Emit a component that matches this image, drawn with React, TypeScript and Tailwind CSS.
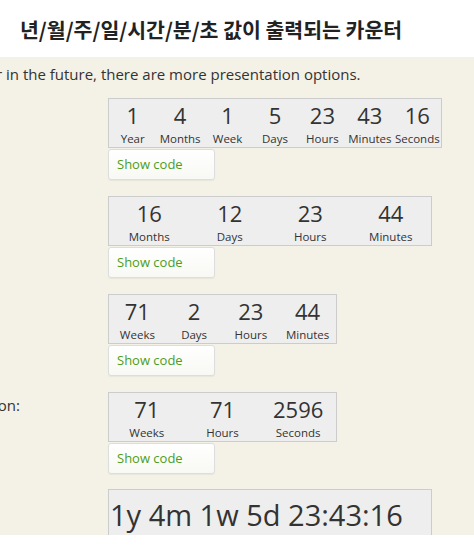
const font = { fontFamily: '"Segoe UI", "Open Sans", "Noto Sans CJK KR", sans-serif' }

type Section = { value: string; label: string }

function Counter({ sections, width }: { sections: Section[]; width: string }) {
  return (
    <div
      className={`${width} grid border border-[#cccccc] bg-[#eeeeee] pt-[2px]`}
      style={{ gridTemplateColumns: `repeat(${sections.length}, minmax(0, 1fr))` }}
    >
      {sections.map((s, i) => (
        <div key={i} className="flex flex-col items-center text-[#333333]">
          <span className="text-[22px] leading-[28px]">{s.value}</span>
          <span className="pt-[2px] text-[11.5px] leading-[16px] whitespace-nowrap">{s.label}</span>
        </div>
      ))}
    </div>
  )
}

function ShowCode() {
  return (
    <button className="mt-px flex h-[31px] w-[107px] items-center rounded-[3px] border border-[#dddddd] bg-gradient-to-b from-white to-[#f8f8f4] pl-[8px] text-[13px] text-[#4c9e1c] shadow-[0_1px_1px_rgba(0,0,0,0.05)]">
      Show code
    </button>
  )
}

export default function App() {
  return (
    <div className="w-[474px] h-[549px] overflow-hidden bg-white" style={font}>
      <div className="h-[57px] pl-[20px] pt-[15px]">
        <h1 className="text-[20.5px] font-bold leading-[28px] text-[#222222]" style={{ fontFamily: '"Noto Sans CJK KR", sans-serif' }}>
          년/월/주/일/시간/분/초 값이 출력되는 카운터
        </h1>
      </div>
      <div className="h-[478px] overflow-hidden bg-[#f4f1e6] text-[#333333]">
        <p className="-ml-[4px] pt-[6px] text-[15px] leading-[22px]">r in the future, there are more presentation options.</p>

        <div className="mt-[13px] flex flex-col pl-[108px]">
          <Counter
            width="w-[334px]"
            sections={[
              { value: '1', label: 'Year' },
              { value: '4', label: 'Months' },
              { value: '1', label: 'Week' },
              { value: '5', label: 'Days' },
              { value: '23', label: 'Hours' },
              { value: '43', label: 'Minutes' },
              { value: '16', label: 'Seconds' },
            ]}
          />
          <ShowCode />

          <div className="mt-[16px]">
            <Counter
              width="w-[324px]"
              sections={[
                { value: '16', label: 'Months' },
                { value: '12', label: 'Days' },
                { value: '23', label: 'Hours' },
                { value: '44', label: 'Minutes' },
              ]}
            />
            <ShowCode />
          </div>

          <div className="mt-[16px]">
            <Counter
              width="w-[229px]"
              sections={[
                { value: '71', label: 'Weeks' },
                { value: '2', label: 'Days' },
                { value: '23', label: 'Hours' },
                { value: '44', label: 'Minutes' },
              ]}
            />
            <ShowCode />
          </div>
        </div>

        <div className="mt-[16px] flex">
          <p className="-ml-[6px] w-[114px] pt-[2px] text-[15px] leading-[22px]">ion:</p>
          <div>
            <Counter
              width="w-[229px]"
              sections={[
                { value: '71', label: 'Weeks' },
                { value: '71', label: 'Hours' },
                { value: '2596', label: 'Seconds' },
              ]}
            />
            <ShowCode />
          </div>
        </div>

        <div className="mt-[15px] pl-[108px]">
          <div className="h-[60px] w-[324px] border border-[#cccccc] bg-[#eeeeee] pl-px text-[29px] leading-[50px] text-[#333333]">
            1y 4m 1w 5d 23:43:16
          </div>
        </div>
      </div>
    </div>
  )
}
